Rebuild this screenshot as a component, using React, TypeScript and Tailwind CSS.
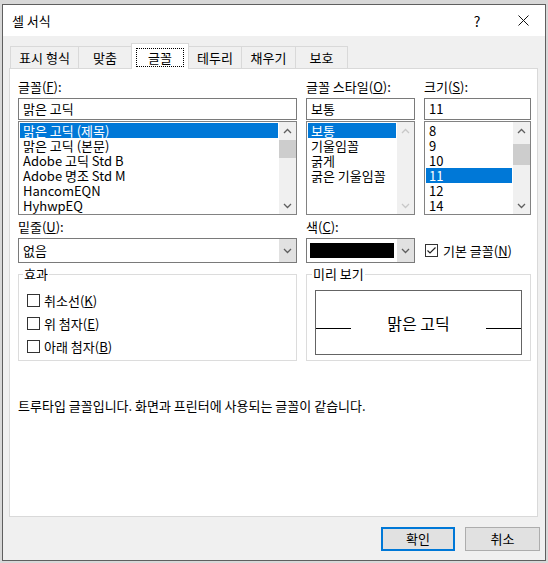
import React from 'react'

type Tab = { label: string; w: string; active?: boolean }

const tabs: Tab[] = [
  { label: '표시 형식', w: 'w-[69px]' },
  { label: '맞춤', w: 'w-[54px]' },
  { label: '글꼴', w: 'w-[58px]', active: true },
  { label: '테두리', w: 'w-[54px]' },
  { label: '채우기', w: 'w-[55px]' },
  { label: '보호', w: 'w-[53px]' },
]

const fonts = ['맑은 고딕 (제목)', '맑은 고딕 (본문)', 'Adobe 고딕 Std B', 'Adobe 명조 Std M', 'HancomEQN', 'HyhwpEQ']
const styles = ['보통', '기울임꼴', '굵게', '굵은 기울임꼴']
const sizes = ['8', '9', '10', '11', '12', '14']

function Chevron({ up, light }: { up?: boolean; light?: boolean }) {
  return (
    <svg width="9" height="6" viewBox="0 0 9 6" className={light ? 'text-[#c8c8c8]' : 'text-[#5f5f5f]'}>
      <path d={up ? 'M1 5 L4.5 1.5 L8 5' : 'M1 1 L4.5 4.5 L8 1'} fill="none" stroke="currentColor" strokeWidth="1.3" />
    </svg>
  )
}

function ScrollBar({ thumb, disabled }: { thumb?: string; disabled?: boolean }) {
  return (
    <div className="w-[17px] h-full flex flex-col bg-[#f0f0f0]">
      <div className="h-[17px] flex items-center justify-center">
        <Chevron up light={disabled} />
      </div>
      <div className="flex-1">{thumb && <div className={`bg-[#cdcdcd] ${thumb}`} />}</div>
      <div className="h-[17px] flex items-center justify-center">
        <Chevron light={disabled} />
      </div>
    </div>
  )
}

function ListBox({ items, selected, thumb, disabled }: { items: string[]; selected: number; thumb?: string; disabled?: boolean }) {
  return (
    <div className="mt-[1px] h-[94px] border border-[#828282] bg-white flex">
      <div className="flex-1 p-[1px] overflow-hidden">
        {items.map((item, i) => (
          <div
            key={item}
            className={`h-[15px] leading-[15px] pl-[3px] whitespace-nowrap ${i === selected ? 'bg-[#0078d7] text-white' : ''}`}
          >
            {item}
          </div>
        ))}
      </div>
      <ScrollBar thumb={thumb} disabled={disabled} />
    </div>
  )
}

function Label({ text, mn, className = '' }: { text: string; mn: string; className?: string }) {
  return (
    <div className={`h-[16px] whitespace-nowrap ${className}`}>
      {text}(<span className="underline">{mn}</span>):
    </div>
  )
}

function Input({ value }: { value: string }) {
  return <div className="mt-[3px] h-[22px] border border-[#7a7a7a] bg-white pl-[4px] leading-[20px]">{value}</div>
}

function CheckBox({ checked }: { checked?: boolean }) {
  return (
    <div className="w-[13px] h-[13px] shrink-0 border border-[#333333] bg-white flex items-center justify-center">
      {checked && (
        <svg width="11" height="11" viewBox="0 0 11 11">
          <path d="M1.5 5.5 L4 8 L9.5 2.5" fill="none" stroke="#222" strokeWidth="1.2" />
        </svg>
      )}
    </div>
  )
}

export default function App() {
  return (
    <div className="w-[548px] h-[563px] bg-[#d8d8d8] pt-[4px] pl-[2px] font-['Noto_Sans_CJK_KR',sans-serif] text-[13px] leading-[16px] text-black">
      <div className="w-[544px] h-[557px] border border-[#5f5f5f] flex flex-col bg-[#f0f0f0]">
        {/* title bar */}
        <div className="h-[31px] bg-white flex items-center pl-[9px]">
          <span>셀 서식</span>
          <div className="ml-auto flex items-center">
            <span className="w-[12px] text-center text-[14px]">?</span>
            <svg width="11" height="11" viewBox="0 0 11 11" className="ml-[35px] mr-[16px]">
              <path d="M0.5 0.5 L10.5 10.5 M10.5 0.5 L0.5 10.5" stroke="#111" strokeWidth="1" />
            </svg>
          </div>
        </div>

        <div className="flex-1 pt-[7px] pl-[6px] pr-[7px]">
          {/* tabs */}
          <div className="flex items-end pl-[1px]">
            {tabs.map((t, i) =>
              t.active ? (
                <div
                  key={t.label}
                  className={`${t.w} h-[26px] -mb-px -ml-px relative z-10 bg-white border border-b-0 border-[#d9d9d9] flex justify-center pt-[4px]`}
                >
                  <span className="w-[48px] h-[19px] border border-dotted border-black flex items-center justify-center">
                    {t.label}
                  </span>
                </div>
              ) : (
                <div
                  key={t.label}
                  className={`${t.w} h-[22px] ${i > 0 ? '-ml-px' : ''} border border-b-0 border-[#d9d9d9] flex items-center justify-center`}
                >
                  {t.label}
                </div>
              ),
            )}
          </div>

          {/* panel */}
          <div className="h-[449px] bg-white border border-[#d9d9d9] pl-[8px] pt-[10px]">
            <div className="flex gap-[9px]">
              <div className="w-[279px] flex flex-col">
                <Label text="글꼴" mn="F" />
                <Input value="맑은 고딕" />
                <ListBox items={fonts} selected={0} thumb="mt-[1px] h-[18px]" />
                <Label text="밑줄" mn="U" className="mt-[4px]" />
                <div className="mt-[3px] h-[25px] border border-[#7a7a7a] bg-white flex">
                  <div className="flex-1 pl-[4px] leading-[23px]">없음</div>
                  <div className="w-[17px] bg-[#e1e1e1] flex items-center justify-center">
                    <Chevron />
                  </div>
                </div>
              </div>

              <div className="w-[109px] flex flex-col">
                <Label text="글꼴 스타일" mn="O" />
                <Input value="보통" />
                <ListBox items={styles} selected={0} disabled />
                <Label text="색" mn="C" className="mt-[4px]" />
                <div className="mt-[3px] h-[25px] border border-[#7a7a7a] bg-white flex items-center">
                  <div className="ml-[3px] w-[84px] h-[15px] bg-black" />
                  <div className="ml-auto w-[17px] h-full bg-[#e1e1e1] flex items-center justify-center">
                    <Chevron />
                  </div>
                </div>
              </div>

              <div className="w-[107px] flex flex-col">
                <Label text="크기" mn="S" />
                <Input value="11" />
                <ListBox items={sizes} selected={3} thumb="mt-[5px] h-[21px]" />
                <div className="mt-[4px] h-[16px]" />
                <div className="mt-[3px] h-[25px] flex items-center gap-[5px] pl-[1px]">
                  <CheckBox checked />
                  <span className="whitespace-nowrap">
                    기본 글꼴(<span className="underline">N</span>)
                  </span>
                </div>
              </div>
            </div>

            {/* groups */}
            <div className="mt-[3px] flex gap-[9px]">
              <fieldset className="w-[279px] h-[95px] border border-[#dcdcdc]">
                <legend className="ml-[4px] px-[1px]">효과</legend>
                <div className="mt-[7px] pl-[8px] flex flex-col">
                  {[
                    ['취소선', 'K'],
                    ['위 첨자', 'E'],
                    ['아래 첨자', 'B'],
                  ].map(([t, k]) => (
                    <div key={t} className="h-[23px] flex items-center gap-[4px]">
                      <CheckBox />
                      <span>
                        {t}(<span className="underline">{k}</span>)
                      </span>
                    </div>
                  ))}
                </div>
              </fieldset>

              <fieldset className="w-[225px] h-[95px] border border-[#dcdcdc]">
                <legend className="ml-[5px] px-[1px]">미리 보기</legend>
                <div className="mt-[8px] mx-[8px] h-[65px] border border-[#646464] flex items-center justify-between">
                  <div className="w-[35px] h-px bg-black mt-[12px]" />
                  <span className="text-[16px]">맑은 고딕</span>
                  <div className="w-[35px] h-px bg-black mt-[12px]" />
                </div>
              </fieldset>
            </div>

            <p className="mt-[37px]">트루타입 글꼴입니다. 화면과 프린터에 사용되는 글꼴이 같습니다.</p>
          </div>

          {/* buttons */}
          <div className="mt-[10px] -mr-[2px] flex justify-end gap-[10px]">
            <button className="w-[74px] h-[24px] border-2 border-[#0078d7] bg-[#e1e1e1]">확인</button>
            <button className="w-[75px] h-[24px] border border-[#adadad] bg-[#e1e1e1]">취소</button>
          </div>
        </div>
      </div>
    </div>
  )
}
